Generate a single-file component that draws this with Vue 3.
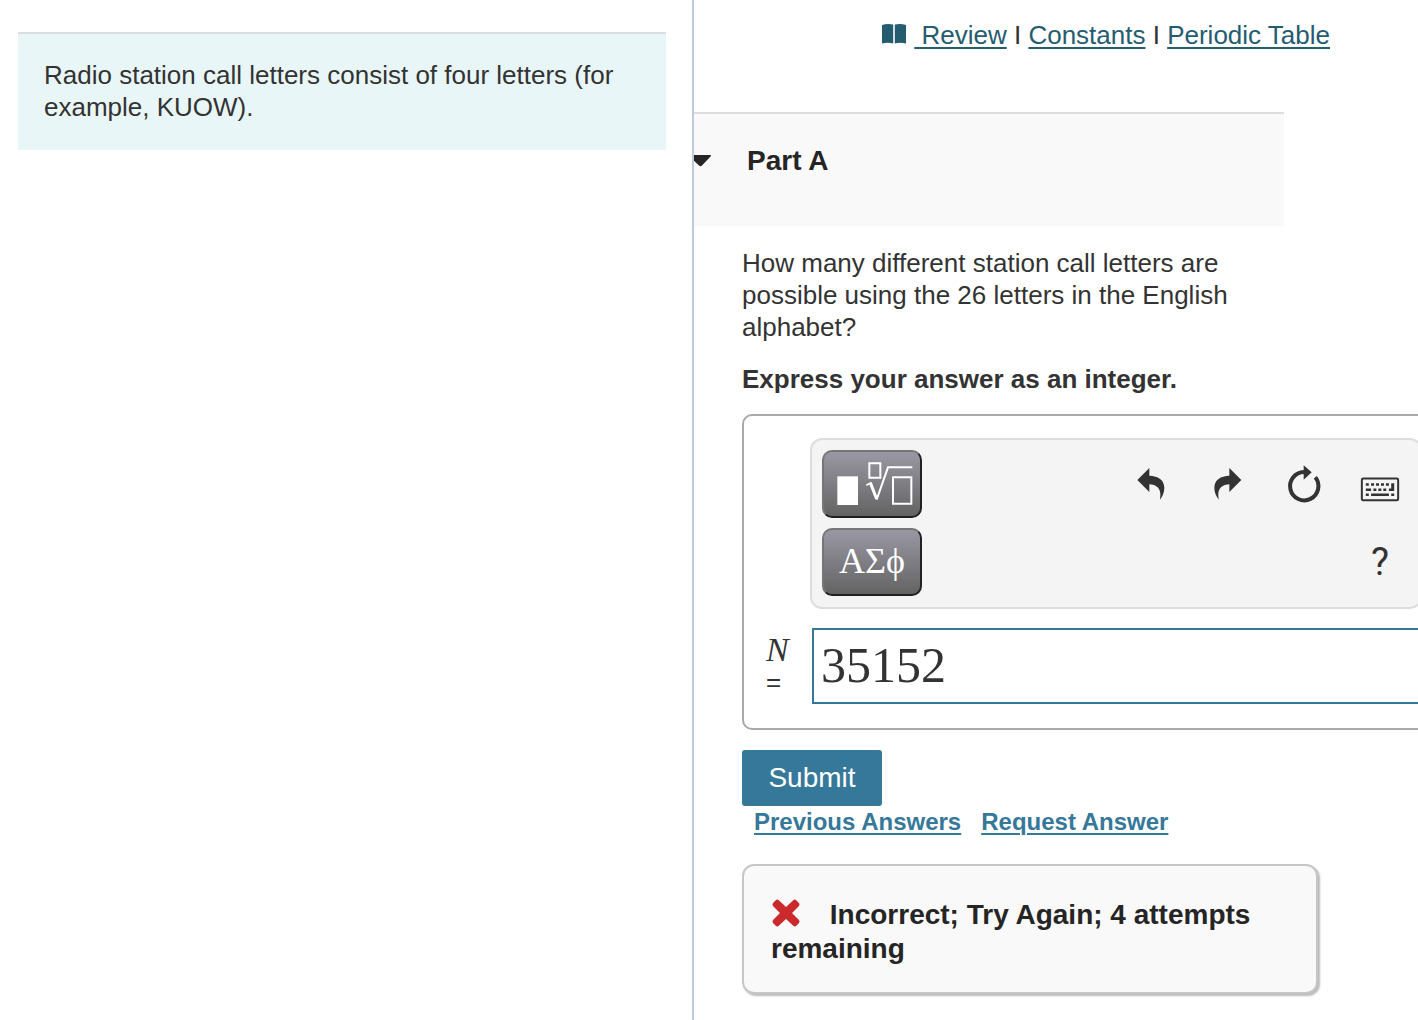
<template>
  <div class="page">
    <aside class="intro-pane">
      <p class="intro">
        Radio station call letters consist of four letters (for example, KUOW).
      </p>
    </aside>

    <main class="work-pane">
      <nav class="resources">
        <svg class="book" viewBox="0 0 24 20" aria-hidden="true">
          <path d="M0 1Q5-0.500 11.200 0.500V19.500Q6 18 0 19.500Z" />
          <path d="M12.800 0.500Q19-0.500 24 1V19.500Q18 18 12.800 19.500Z" />
        </svg>
        <a href="#review" class="review">&nbsp;Review</a> I
        <a href="#constants">Constants</a> I
        <a href="#periodic">Periodic Table</a>
      </nav>

      <header class="part-header">
        <button
          class="toggle"
          type="button"
          aria-label="Toggle Part A"
          :aria-expanded="open"
          @click="open = !open"
        >
          <svg viewBox="0 0 18 12" aria-hidden="true">
            <path d="M-5 0H16Q18 0 16.500 1.500L8 10.500Q6.500 12 5 10.500L-5 1Z" />
          </svg>
        </button>
        <h2>Part A</h2>
      </header>

      <form v-show="open" class="part-body" @submit.prevent>
        <p class="question">
          How many different station call letters are possible using the 26
          letters in the English alphabet?
        </p>
        <p class="instructions">Express your answer as an integer.</p>

        <div class="answer-box">
          <div class="toolbar">
            <div class="palettes">
              <button class="palette" type="button" aria-label="Templates">
                <svg class="template-icon" viewBox="291 170 240 135" aria-hidden="true">
                  <path d="M307 213H369V299H307Z" fill="#fff" />
                  <g fill="none" stroke="#fff">
                    <path d="M403 174H436V217H403Z" stroke-width="6" />
                    <path d="M474 216H529V295H474Z" stroke-width="6" />
                    <path d="M394 240L408 232" stroke-width="5" />
                    <path d="M406 232L425 281" stroke-width="9" />
                    <path d="M425 283L459 186H532" stroke-width="6" />
                  </g>
                </svg>
              </button>
              <button class="palette greek" type="button">ΑΣϕ</button>
            </div>

            <div class="tools">
              <button
                v-for="tool in tools"
                :key="tool.name"
                class="tool"
                type="button"
                :aria-label="tool.name"
              >
                <svg
                  :class="tool.name"
                  :viewBox="tool.box"
                  aria-hidden="true"
                >
                  <path v-if="tool.line" class="line" :d="tool.line" />
                  <path :d="tool.fill" />
                </svg>
              </button>
              <button class="tool help" type="button">?</button>
            </div>
          </div>

          <div class="answer-row">
            <label for="answer"><i>N</i><span>=</span></label>
            <input id="answer" v-model="answer" type="text" />
          </div>
        </div>

        <button class="submit" type="submit">Submit</button>
        <div class="links">
          <a href="#previous">Previous Answers</a>
          <a href="#request">Request Answer</a>
        </div>

        <div class="feedback" role="status">
          <svg class="cross" viewBox="0 0 28 28" aria-hidden="true">
            <path
              d="M6.500 1L14 8L21.500 1Q23 0 24.500 1.500L27 4Q28 5.500 27 7L20 14L27 21Q28 22.500 27 24L24.500 26.500Q23 28 21.500 27L14 20L6.500 27Q5 28 3.500 26.500L1 24Q0 22.500 1 21L8 14L1 7Q0 5.500 1 4L3.500 1.500Q5 0 6.500 1Z"
            />
          </svg>
          Incorrect; Try Again; 4 attempts remaining
        </div>
      </form>
    </main>
  </div>
</template>

<script setup>
import { ref } from "vue";

const open = ref(true);
const answer = ref("35152");

const tools = [
  {
    name: "undo",
    box: "52 114 84 96",
    fill: "M50 150L86 114V137C112 138 131 149 131 174C131 188 125 200 118 209C122 188 119 165 86 163V186Z",
  },
  {
    name: "redo",
    box: "282 114 84 96",
    fill: "M364 150L328 114V137C302 138 283 149 283 174C283 188 289 200 297 209C292 188 295 165 328 163V186Z",
  },
  {
    name: "reset",
    box: "501 106 102 114",
    line: "M552 127A42.500 42.500 0 1 0 586 143",
    fill: "M551 107L575 128L551 150Z",
  },
  {
    name: "keyboard",
    box: "720 109 120 106",
    line: "M729 144H831Q835 144 835 148V206Q835 210 831 210H729Q725 210 725 206V148Q725 144 729 144Z",
    fill: "M737 158h9v8h-9zM753 158h9v8h-9zM768 158h9v8h-9zM783 158h9v8h-9zM798 158h9v8h-9zM814 158h9v24h-16v-8h7zM737 174h16v8h-16zM760 174h9v8h-9zM775 174h9v8h-9zM790 174h9v8h-9zM737 189h9v8h-9zM753 189h54v8h-54zM814 189h9v8h-9z",
  },
];
</script>

<style>
body {
  margin: 0;
  background: #fff;
}
</style>

<style scoped>
.page {
  display: grid;
  grid-template-columns: minmax(0, 347fr) minmax(0, 362fr);
  min-height: 100vh;
  font-family: "Liberation Sans", Arial, sans-serif;
  font-size: 26px;
  line-height: 32px;
  color: #333;
}

button {
  padding: 0;
  border: 0;
  background: none;
  font-family: inherit;
  color: inherit;
  cursor: pointer;
}

svg {
  display: block;
  fill: currentColor;
  overflow: visible;
}

.intro-pane {
  padding: 32px 26px 0 18px;
  border-right: 2px solid #bccadd;
}

.intro {
  margin: 0;
  padding: 25px 26px 27px;
  border-top: 2px solid #dadddd;
  background: #e9f6f7;
}

.work-pane {
  overflow: hidden;
}

.resources {
  padding: 19px 88px 61px 0;
  text-align: right;
}

.resources a {
  color: #255c70;
  text-decoration-thickness: 2px;
  text-underline-offset: 3px;
}

.book {
  display: inline-block;
  width: 24px;
  height: 20px;
  margin-right: 8px;
  color: #255c70;
}

.part-header {
  display: flex;
  align-items: center;
  margin-right: 134px;
  padding: 31px 0 49px;
  border-top: 2px solid #ddd;
  background: #f9f9f9;
  color: #252525;
}

.toggle {
  width: 18px;
  margin-right: 35px;
}

.toggle svg {
  width: 18px;
  height: 12px;
}

.part-header h2 {
  margin: 0;
  font-size: 28px;
  line-height: 32px;
}

.part-body {
  padding: 21px 0 26px 48px;
}

.question {
  margin: 0 134px 20px 0;
}

.instructions {
  margin: 0 134px 19px 0;
  font-weight: bold;
}

.answer-box {
  margin-right: -26px;
  padding: 22px 22px 24px;
  border: 2px solid #a9a9a9;
  border-radius: 10px;
}

.toolbar {
  display: flex;
  justify-content: space-between;
  margin: 0 -2px 19px 44px;
  padding: 10px 2px 11px 10px;
  border: 2px solid #ddd;
  border-radius: 12px;
  background: #f4f4f4;
}

.palettes {
  display: grid;
  gap: 10px;
}

.palette {
  display: flex;
  align-items: center;
  justify-content: center;
  width: 100px;
  height: 68px;
  border: 2px solid;
  border-color: #767676 #212121 #212121 #767676;
  border-radius: 10px;
  background: linear-gradient(#9a98a4, #636363);
  color: #fff;
}

.template-icon {
  width: 80px;
  height: 45px;
}

.greek {
  padding-bottom: 3px;
  font-family: "Liberation Serif", serif;
  font-size: 36px;
}

.tools {
  display: grid;
  grid-template-columns: repeat(4, 76px);
  grid-auto-rows: 68px;
  gap: 10px 0;
}

.tool {
  display: flex;
  align-items: center;
  justify-content: center;
}

.undo,
.redo {
  width: 28px;
  height: 32px;
}

.reset {
  width: 34px;
  height: 38px;
}

.keyboard {
  width: 40px;
  height: 35px;
}

.line {
  fill: none;
  stroke: currentColor;
  stroke-width: 12;
}

.keyboard .line {
  stroke-width: 6;
}

.help {
  grid-column: 4;
  font-family: Roboto, sans-serif;
  font-size: 38px;
}

.answer-row {
  display: flex;
}

.answer-row label {
  flex: 0 0 46px;
  padding-top: 6px;
}

.answer-row label i,
.answer-row label span {
  display: block;
}

.answer-row i {
  font-family: "Liberation Serif", serif;
  font-size: 34px;
}

.answer-row input {
  flex: 1;
  min-width: 0;
  height: 76px;
  box-sizing: border-box;
  padding: 0 7px 2px;
  border: 2px solid #367899;
  border-radius: 0;
  outline: none;
  background: #fff;
  color: #333;
  font-family: "Liberation Serif", serif;
  font-size: 50px;
}

.submit {
  display: block;
  min-width: 140px;
  height: 56px;
  margin-top: 20px;
  padding: 0 26px;
  border-radius: 3px;
  background: #367899;
  color: #fff;
  font-size: 28px;
}

.links {
  display: flex;
  gap: 20px;
  padding-left: 12px;
  font-size: 24px;
  font-weight: bold;
}

.links a {
  color: #367899;
  text-decoration-thickness: 2px;
  text-underline-offset: 3px;
}

.feedback {
  margin: 26px 100px 0 0;
  padding: 32px 26px 26px 27px;
  border: 2px solid #c6c6c6;
  border-radius: 12px;
  background: #f9f9f9;
  box-shadow: 2px 2px 2px #bbb;
  color: #252525;
  font-size: 28px;
  font-weight: bold;
  line-height: 34px;
}

.cross {
  display: inline-block;
  width: 28px;
  height: 28px;
  margin: 0 22px 0 1px;
  vertical-align: -3px;
  color: #cb2a2d;
}
</style>
